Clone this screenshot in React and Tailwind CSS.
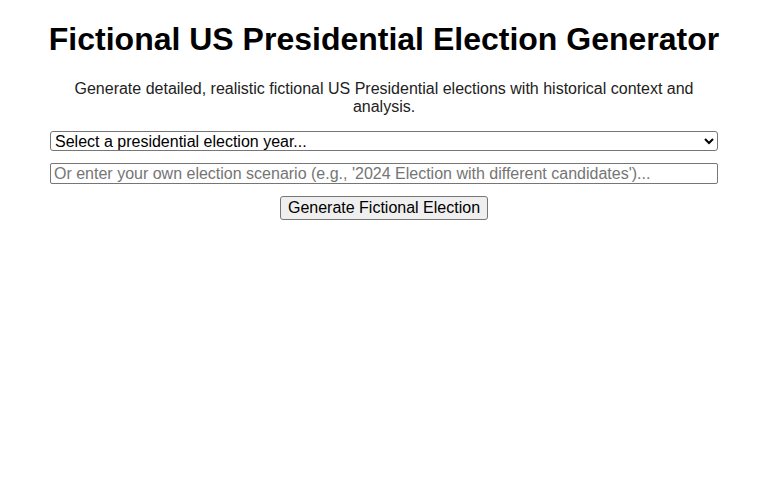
import React, { useState } from 'react';

const years = ['2024', '2020', '2016', '2012', '2008', '2004', '2000'];

export default function App() {
  const [year, setYear] = useState('');
  const [scenario, setScenario] = useState('');

  return (
    <div className="min-h-screen bg-white text-black font-['Liberation_Sans',Arial,sans-serif] pt-[21px]">
      <h1 className="text-[32px] font-bold text-center leading-[37px] whitespace-nowrap">
        Fictional US Presidential Election Generator
      </h1>

      <div className="px-[50px]">
        <p className="mt-[22px] text-base leading-[18px] text-center text-[#222] px-[20px]">
          Generate detailed, realistic fictional US Presidential elections with historical context and analysis.
        </p>

        <div className="mt-[15px] flex flex-col items-center gap-[12px]">
          <select
            value={year}
            onChange={(e) => setYear(e.target.value)}
            className="w-full h-[20px] text-base leading-[18px] border border-[#767676] rounded-[3px] bg-white text-black px-0"
          >
            <option value="">Select a presidential election year...</option>
            {years.map((y) => (
              <option key={y} value={y}>{y} Election</option>
            ))}
          </select>

          <input
            type="text"
            value={scenario}
            onChange={(e) => setScenario(e.target.value)}
            placeholder="Or enter your own election scenario (e.g., '2024 Election with different candidates')..."
            className="w-full h-[21px] text-base leading-[18px] border border-[#767676] rounded-[2px] px-[3px] placeholder:text-[#757575]"
          />

          <button className="h-[24px] px-[7px] text-base leading-[18px] bg-[#efefef] border border-[#767676] rounded-[3px] text-black">
            Generate Fictional Election
          </button>
        </div>
      </div>
    </div>
  );
}
